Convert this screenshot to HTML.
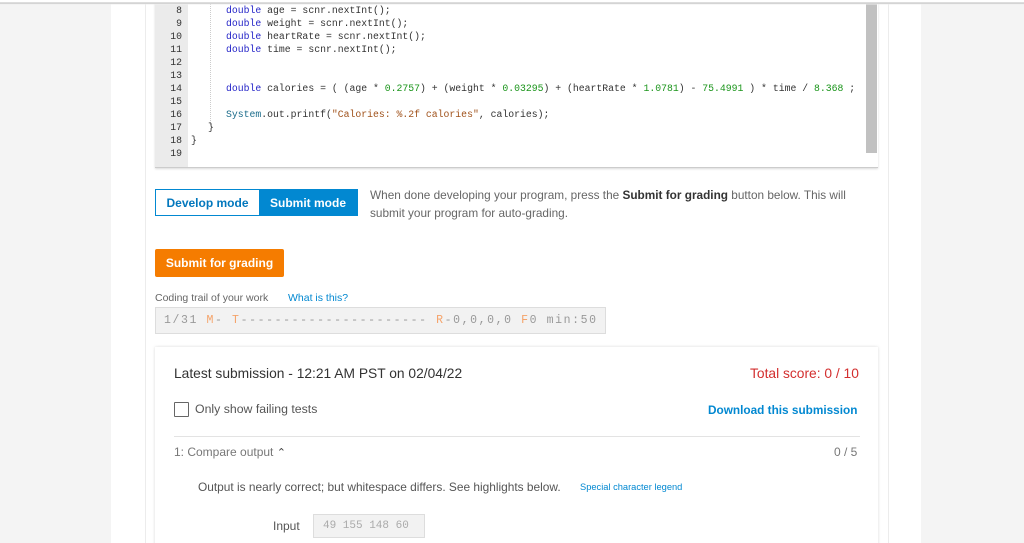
<!DOCTYPE html>
<html><head><meta charset="utf-8"><style>
*{margin:0;padding:0;box-sizing:border-box}
html,body{width:1024px;height:543px;overflow:hidden}
body{background:#f4f4f4;font-family:"Liberation Sans",sans-serif;position:relative}
.col{position:absolute;left:111px;top:0;width:810px;height:543px;background:#fff}
.vl{position:absolute;top:0;height:543px;width:1px;background:#ececec}
.topsh{position:absolute;left:0;top:0;width:1024px;height:5px;background:linear-gradient(#fff 0,#fff 2px,#bbb 3px,#eee 4px,rgba(255,255,255,0) 5px)}
.ed{position:absolute;left:155px;top:0;width:723px;height:168px;background:#fff;border-bottom:1px solid #ccc;box-shadow:0 1px 2px rgba(0,0,0,.15)}
.gut{position:absolute;left:0;top:0;width:33px;height:167px;background:#ebebeb}
.ln{position:absolute;left:0;width:27px;text-align:right;font:9.8px "Liberation Mono",monospace;color:#333}
.cd{position:absolute;font:9.8px "Liberation Mono",monospace;color:#333;white-space:pre}
.k{color:#2525c8}.n{color:#1b951b}.s{color:#a0521b}.t{color:#1a6b8a}
.sb{position:absolute;left:711px;top:0;width:11px;height:153px;background:#c1c1c1}
.guide{position:absolute;left:55px;top:0;width:0;height:125px;border-left:1px dotted #ccc}
.txt{position:absolute;font-size:12.5px;color:#555;white-space:nowrap}
</style></head><body>
<div class="col"></div>
<div class="vl" style="left:145px"></div>
<div class="vl" style="left:888px"></div>
<div class="ed">
<div class="gut"></div>
<div class="guide"></div>
<div class="ln" style="top:5px">8</div><div class="ln" style="top:18px">9</div><div class="ln" style="top:31px">10</div><div class="ln" style="top:44px">11</div><div class="ln" style="top:57px">12</div><div class="ln" style="top:70px">13</div><div class="ln" style="top:83px">14</div><div class="ln" style="top:96px">15</div><div class="ln" style="top:109px">16</div><div class="ln" style="top:122px">17</div><div class="ln" style="top:135px">18</div><div class="ln" style="top:148px">19</div>
<div class="cd" style="left:71px;top:5px"><span class="k">double</span> age = scnr.nextInt();</div>
<div class="cd" style="left:71px;top:18px"><span class="k">double</span> weight = scnr.nextInt();</div>
<div class="cd" style="left:71px;top:31px"><span class="k">double</span> heartRate = scnr.nextInt();</div>
<div class="cd" style="left:71px;top:44px"><span class="k">double</span> time = scnr.nextInt();</div>
<div class="cd" style="left:71px;top:83px"><span class="k">double</span> calories = ( (age * <span class="n">0.2757</span>) + (weight * <span class="n">0.03295</span>) + (heartRate * <span class="n">1.0781</span>) - <span class="n">75.4991</span> ) * time / <span class="n">8.368</span> ;</div>
<div class="cd" style="left:71px;top:109px"><span class="t">System</span>.out.printf(<span class="s">"Calories: %.2f calories"</span>, calories);</div>
<div class="cd" style="left:53px;top:122px">}</div>
<div class="cd" style="left:36px;top:135px">}</div>
<div class="sb"></div>
</div>
<div style="position:absolute;left:155px;top:189px;width:203px;height:27px;border:1px solid #0288d1;display:flex;font-weight:bold;font-size:12px">
<div style="width:103px;background:#fff;color:#0277bd;display:flex;align-items:center;justify-content:center">Develop mode</div>
<div style="flex:1;background:#0288d1;color:#fff;display:flex;align-items:center;justify-content:center">Submit mode</div></div>
<div class="txt" style="left:370px;top:186px;font-size:11.8px;line-height:18px;color:#666">When done developing your program, press the <b style="color:#333">Submit for grading</b> button below. This will<br>submit your program for auto-grading.</div>
<div style="position:absolute;left:155px;top:249px;width:129px;height:28px;background:#f57c00;color:#fff;font-weight:bold;font-size:12px;display:flex;align-items:center;justify-content:center;border-radius:2px">Submit for grading</div>
<div class="txt" style="left:155px;top:292px;font-size:10.5px;color:#666">Coding trail of your work</div>
<div class="txt" style="left:288px;top:292px;font-size:10.5px;color:#0288d1">What is this?</div>
<div style="position:absolute;left:155px;top:307px;width:451px;height:27px;background:#f2f2f2;border:1px solid #ddd;font:11.5px 'Liberation Mono',monospace;letter-spacing:1.6px;color:#999;padding:6px 0 0 8px;white-space:pre;overflow:hidden">1/31 <span style="color:#f5a36a">M</span>- <span style="color:#f5a36a">T</span>---------------------- <span style="color:#f5a36a">R</span>-0,0,0,0 <span style="color:#f5a36a">F</span>0 min:50</div>
<div style="position:absolute;left:155px;top:347px;width:723px;height:200px;background:#fff;box-shadow:0 0 3px rgba(0,0,0,.15)"></div>
<div class="txt" style="left:174px;top:366px;font-size:13.8px;color:#333">Latest submission - 12:21 AM PST on 02/04/22</div>
<div class="txt" style="left:750px;top:366px;font-size:13.8px;color:#d32f2f">Total score: 0 / 10</div>
<div style="position:absolute;left:174px;top:402px;width:15px;height:15px;border:1.5px solid #666;border-radius:1px"></div>
<div class="txt" style="left:195px;top:402px;font-size:12.3px;color:#555">Only show failing tests</div>
<div class="txt" style="left:708px;top:403px;font-size:11.8px;font-weight:bold;color:#0288d1">Download this submission</div>
<div style="position:absolute;left:174px;top:436px;width:686px;height:1px;background:#e3e3e3"></div>
<div class="txt" style="left:174px;top:445px;font-size:12px;color:#777">1: Compare output <span style="font-size:11px;color:#444">&#8963;</span></div>
<div class="txt" style="left:834px;top:445px;font-size:12px;color:#777">0 / 5</div>
<div class="txt" style="left:198px;top:480px;font-size:11.9px;color:#555">Output is nearly correct; but whitespace differs. See highlights below.</div>
<div class="txt" style="left:580px;top:482px;font-size:9.3px;color:#0288d1">Special character legend</div>
<div class="txt" style="left:273px;top:519px;font-size:12px;color:#555">Input</div>
<div style="position:absolute;left:313px;top:514px;width:112px;height:24px;background:#f2f2f2;border:1px solid #ddd;font:11px 'Liberation Mono',monospace;color:#aaa;padding:5px 0 0 9px;white-space:pre">49 155 148 60</div>
<div class="topsh"></div>
</body></html>
